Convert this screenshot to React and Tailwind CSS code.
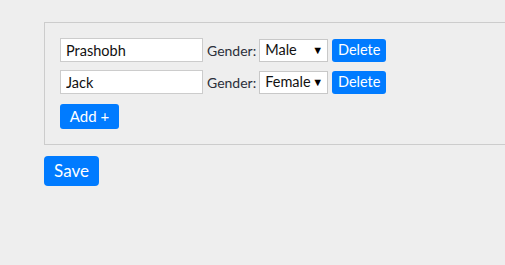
import React from "react";

function Row({ name, gender }) {
  return (
    <div className="flex items-center h-[24px]">
      <input
        defaultValue={name}
        className="w-[143px] h-[24px] bg-white border border-[#cccccc] px-[5px] text-[14.5px] text-[#111] outline-none"
      />
      <span className="ml-[4px] text-[14px] text-[#2b2f3a]">Gender:</span>
      <div className="relative ml-[3px] w-[69px] h-[23px] bg-white border border-[#c8c8c8] flex items-center">
        <span className="pl-[5px] text-[14.5px] text-[#111]">{gender}</span>
        <span className="absolute right-[4px] top-[3px] text-[11px] leading-[14px] text-black">▼</span>
      </div>
      <button className="ml-[4px] w-[54px] h-[23px] bg-[#007bff] rounded-[3px] text-white text-[14.5px] flex items-center justify-center">
        Delete
      </button>
    </div>
  );
}

export default function App() {
  return (
    <div
      className="w-[505px] h-[265px] bg-[#eeeeee] overflow-hidden pt-[22px] pl-[44px]"
      style={{ fontFamily: 'Lato, sans-serif' }}
    >
      <div className="w-[600px] border border-[#cccccc] pt-[15px] pb-[15px] pl-[15px] flex flex-col">
        <div className="flex flex-col gap-[8px]">
          <Row name="Prashobh" gender="Male" />
          <Row name="Jack" gender="Female" />
        </div>
        <button className="mt-[10px] w-[59px] h-[25px] bg-[#007bff] rounded-[3px] text-white text-[15px] flex items-center justify-center">
          Add +
        </button>
      </div>
      <button className="mt-[11px] w-[55px] h-[30px] bg-[#007bff] rounded-[4px] text-white text-[17px] flex items-center justify-center">
        Save
      </button>
    </div>
  );
}
